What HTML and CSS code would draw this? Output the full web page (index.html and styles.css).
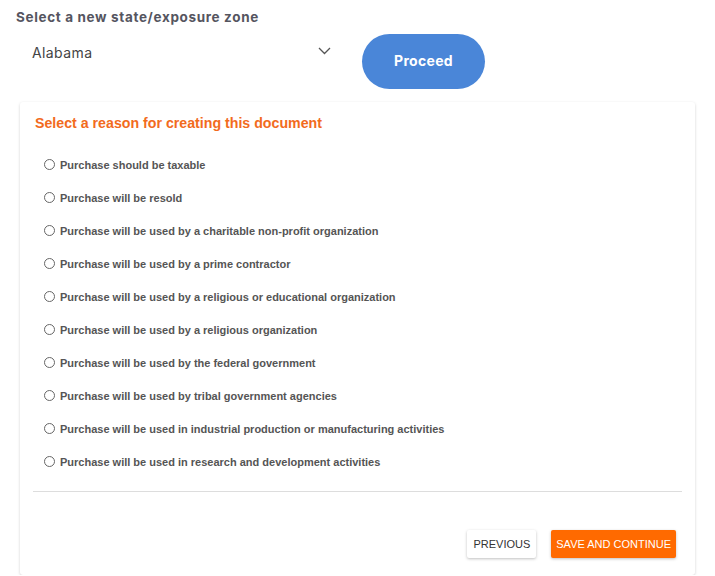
FILE: index.html
```html
<!DOCTYPE html>
<html>
<head>
<meta charset="utf-8">
<link rel="stylesheet" href="styles.css">
</head>
<body>
<div class="page">
  <h2 class="zone-label">Select a new state/exposure zone</h2>
  <div class="zone-row">
    <div class="select">
      <span class="select-value">Alabama</span>
      <svg class="chevron" width="13" height="8" viewBox="0 0 13 8"><path d="M1 1 L6.5 6.5 L12 1" fill="none" stroke="#555" stroke-width="1.3"/></svg>
    </div>
    <button class="proceed">Proceed</button>
  </div>
  <div class="card">
    <h3 class="card-title">Select a reason for creating this document</h3>
    <ul class="reasons">
      <li><span class="radio"></span>Purchase should be taxable</li>
      <li><span class="radio"></span>Purchase will be resold</li>
      <li><span class="radio"></span>Purchase will be used by a charitable non-profit organization</li>
      <li><span class="radio"></span>Purchase will be used by a prime contractor</li>
      <li><span class="radio"></span>Purchase will be used by a religious or educational organization</li>
      <li><span class="radio"></span>Purchase will be used by a religious organization</li>
      <li><span class="radio"></span>Purchase will be used by the federal government</li>
      <li><span class="radio"></span>Purchase will be used by tribal government agencies</li>
      <li><span class="radio"></span>Purchase will be used in industrial production or manufacturing activities</li>
      <li><span class="radio"></span>Purchase will be used in research and development activities</li>
    </ul>
    <hr class="divider">
    <div class="actions">
      <button class="btn btn-prev">PREVIOUS</button>
      <button class="btn btn-save">SAVE AND CONTINUE</button>
    </div>
  </div>
</div>
</body>
</html>
```
FILE: styles.css
```css
html, body {
  margin: 0;
  padding: 0;
  background: #fff;
}
.page {
  padding: 9px 20px 0 16px;
  font-family: "Liberation Sans", Arial, sans-serif;
}
.zone-label {
  margin: 0;
  font-family: Inter, "Liberation Sans", sans-serif;
  font-weight: 700;
  font-size: 13.5px;
  letter-spacing: 0.65px;
  line-height: 16px;
  color: #55555f;
}
.zone-row {
  display: flex;
  align-items: flex-start;
  margin-top: 9px;
}
.select {
  width: 299px;
  display: flex;
  align-items: center;
  justify-content: space-between;
  padding: 0 0 0 16px;
  height: 36px;
}
.select-value {
  font-family: Inter, "Liberation Sans", sans-serif;
  font-size: 14px;
  letter-spacing: 0.4px;
  color: #444;
  margin-top: 1px;
}
.chevron {
  margin-top: -2px;
}
.proceed {
  margin-left: 31px;
  width: 123px;
  height: 55px;
  border: none;
  border-radius: 28px;
  background: #4a86d8;
  color: #fff;
  font-family: Inter, "Liberation Sans", sans-serif;
  font-weight: 700;
  font-size: 14px;
  letter-spacing: 0.3px;
  padding-bottom: 4px;
  cursor: pointer;
}
.card {
  margin: 13px 0 0 4px;
  background: #fff;
  box-shadow: 0 1px 3px rgba(0,0,0,0.18);
  border-radius: 3px;
  padding: 13px 13px 17px 13px;
}
.card-title {
  margin: 0 0 0 2px;
  font-size: 14.2px;
  line-height: 16px;
  font-weight: bold;
  color: #f26b1d;
}
.reasons {
  list-style: none;
  margin: 17px 0 0 0;
  padding: 0 0 0 11px;
}
.reasons li {
  display: flex;
  align-items: center;
  height: 33px;
  font-size: 11px;
  font-weight: bold;
  color: #555;
}
.radio {
  width: 9px;
  height: 9px;
  border: 1px solid #666;
  border-radius: 50%;
  margin-right: 5px;
  flex-shrink: 0;
}
.divider {
  border: none;
  border-top: 1px solid #ddd;
  margin: 13px 0 0 0;
}
.actions {
  display: flex;
  justify-content: flex-end;
  gap: 15px;
  margin-top: 38px;
  padding-right: 6px;
}
.btn {
  font-family: "Liberation Sans", Arial, sans-serif;
  font-size: 11px;
  height: 28px;
  border: none;
  border-radius: 2px;
  padding: 0 5px;
  cursor: pointer;
  box-shadow: 0 1px 3px rgba(0,0,0,0.25);
}
.btn-prev {
  background: #fff;
  color: #333;
  padding: 0 6px;
}
.btn-save {
  background: #ff6a00;
  color: #fff;
}
```
